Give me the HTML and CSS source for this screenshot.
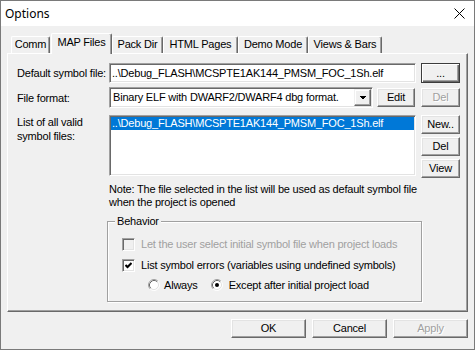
FILE: index.html
```html
<!DOCTYPE html>
<html>
<head>
<meta charset="utf-8">
<title>Options</title>
<link rel="stylesheet" href="styles.css">
</head>
<body>
<div class="window">
  <div class="titlebar">
    <span class="title">Options</span>
    <svg class="close" width="11" height="11" viewBox="0 0 11 11"><path d="M0.5 0.5L10.5 10.5M10.5 0.5L0.5 10.5" stroke="#000" stroke-width="1" fill="none"/></svg>
  </div>
  <div class="client">
    <div class="tabs">
      <div class="tab tab-comm">Comm</div>
      <div class="tab tab-map active">MAP Files</div>
      <div class="tab tab-pack">Pack Dir</div>
      <div class="tab tab-html">HTML Pages</div>
      <div class="tab tab-demo">Demo Mode</div>
      <div class="tab tab-views">Views &amp; Bars</div>
    </div>
    <div class="panel">
      <div class="form">
        <div class="lbl">Default symbol file:</div>
        <div class="field sunken">..\Debug_FLASH\MCSPTE1AK144_PMSM_FOC_1Sh.elf</div>
        <button class="btn btn-side btn-default">...</button>

        <div class="lbl r2">File format:</div>
        <div class="combo-row r2">
          <div class="combo sunken">
            <span class="combo-text">Binary ELF with DWARF2/DWARF4 dbg format.</span>
            <span class="combo-btn"><svg width="7" height="4" viewBox="0 0 7 4"><path d="M0 0H7L3.5 3.5Z" fill="#000"/></svg></span>
          </div>
          <button class="btn btn-edit">Edit</button>
        </div>
        <button class="btn btn-side r2" disabled>Del</button>

        <div class="lbl lbl-multi r3">List of all valid<br>symbol files:</div>
        <div class="listbox sunken r3">
          <div class="item selected">..\Debug_FLASH\MCSPTE1AK144_PMSM_FOC_1Sh.elf</div>
        </div>
        <div class="side-stack r3">
          <button class="btn btn-side">New..</button>
          <button class="btn btn-side">Del</button>
          <button class="btn btn-side">View</button>
        </div>

        <p class="note">Note: The file selected in the list will be used as default symbol file<br>when the project is opened</p>

        <fieldset class="group">
          <legend>Behavior</legend>
          <div class="check disabled">
            <span class="cb cb-disabled"></span>
            <span>Let the user select initial symbol file when project loads</span>
          </div>
          <div class="check">
            <span class="cb"><svg width="7" height="7" viewBox="0 0 7 7"><path d="M0.5 3L2.5 5L6.5 1" stroke="#000" stroke-width="2" fill="none"/></svg></span>
            <span>List symbol errors (variables using undefined symbols)</span>
          </div>
          <div class="radios">
            <div class="radio">
              <svg class="rb" width="12" height="12" viewBox="0 0 12 12">
                <circle cx="6" cy="6" r="5" fill="#fff"/>
                <path d="M2.11 9.89A5.5 5.5 0 0 1 9.89 2.11" stroke="#a0a0a0" fill="none"/>
                <path d="M9.89 2.11A5.5 5.5 0 0 1 2.11 9.89" stroke="#fff" fill="none"/>
                <path d="M2.82 9.18A4.5 4.5 0 0 1 9.18 2.82" stroke="#696969" fill="none"/>
                <path d="M9.18 2.82A4.5 4.5 0 0 1 2.82 9.18" stroke="#e3e3e3" fill="none"/>
              </svg>
              <span>Always</span>
            </div>
            <div class="radio radio-second">
              <svg class="rb" width="12" height="12" viewBox="0 0 12 12">
                <circle cx="6" cy="6" r="5" fill="#fff"/>
                <path d="M2.11 9.89A5.5 5.5 0 0 1 9.89 2.11" stroke="#a0a0a0" fill="none"/>
                <path d="M9.89 2.11A5.5 5.5 0 0 1 2.11 9.89" stroke="#fff" fill="none"/>
                <path d="M2.82 9.18A4.5 4.5 0 0 1 9.18 2.82" stroke="#696969" fill="none"/>
                <path d="M9.18 2.82A4.5 4.5 0 0 1 2.82 9.18" stroke="#e3e3e3" fill="none"/>
                <circle cx="6" cy="6" r="2" fill="#000"/>
              </svg>
              <span>Except after initial project load</span>
            </div>
          </div>
        </fieldset>
      </div>
    </div>
    <div class="footer">
      <button class="btn btn-lg">OK</button>
      <button class="btn btn-lg">Cancel</button>
      <button class="btn btn-lg" disabled>Apply</button>
    </div>
  </div>
</div>
</body>
</html>
```

FILE: styles.css
```css
* { box-sizing: border-box; }
html, body { margin: 0; padding: 0; }
body {
  font-family: "Liberation Sans", Arial, sans-serif;
  font-size: 11px;
  letter-spacing: -0.2px;
  color: #000;
  background: #f0f0f0;
}
.window {
  width: 475px;
  height: 350px;
  border: 1px solid #7a7a7a;
  background: #f0f0f0;
  display: flex;
  flex-direction: column;
}
.titlebar {
  flex: none;
  height: 25px;
  background: #fff;
  display: flex;
  align-items: center;
  justify-content: space-between;
  padding: 0 9px 0 4px;
}
.title {
  font-family: "Segoe UI", "Noto Sans", sans-serif;
  font-size: 12px;
  letter-spacing: 0;
}
.close { display: block; }
.client {
  flex: 1;
  display: flex;
  flex-direction: column;
  padding: 7px 6px 0 6px;
}
.tabs {
  flex: none;
  display: flex;
  align-items: flex-end;
  height: 20px;
  padding-left: 4px;
}
.tab {
  height: 17px;
  border-top: 1px solid #fff;
  border-left: 1px solid #fff;
  border-right: 1px solid #696969;
  border-radius: 2px 2px 0 0;
  box-shadow: inset -1px 0 0 #a0a0a0;
  background: #f0f0f0;
  text-align: center;
  line-height: 15px;
  white-space: nowrap;
}
.tab.active {
  height: 21px;
  margin-bottom: -1px;
  margin-left: 1px;
  position: relative;
  z-index: 1;
  line-height: 17px;
}
.tab-comm { width: 39px; }
.tab-map { width: 61px; }
.tab-pack { width: 51px; }
.tab-html { width: 75px; }
.tab-demo { width: 70px; }
.tab-views { width: 74px; }

.panel {
  flex: none;
  height: 259px;
  border: 1px solid;
  border-color: #fff #696969 #696969 #fff;
  box-shadow: inset -1px -1px 0 #a0a0a0;
  padding: 9px 0 0 9px;
}
.form {
  display: grid;
  grid-template-columns: 92px 307px 44px;
  align-items: center;
}
.lbl { white-space: nowrap; line-height: 14px; }
.r2 { margin-top: 4px; }
.r3 { margin-top: 7px; align-self: start; }
.lbl-multi { line-height: 14px; }

.sunken {
  border: 1px solid;
  border-color: #a0a0a0 #fff #fff #a0a0a0;
  box-shadow: inset 1px 1px 0 #696969, inset -1px -1px 0 #e3e3e3;
  background: #fff;
}
.field {
  height: 20px;
  line-height: 18px;
  padding-left: 2px;
  white-space: nowrap;
  overflow: hidden;
}
.btn {
  font: inherit;
  letter-spacing: inherit;
  color: #000;
  background: #f0f0f0;
  border: 1px solid;
  border-color: #fff #696969 #696969 #fff;
  border-radius: 0;
  box-shadow: inset -1px -1px 0 #a0a0a0, inset 1px 1px 0 #e3e3e3;
  padding: 0;
  height: 19px;
  line-height: 15px;
  text-align: center;
}
.btn:disabled {
  color: #a0a0a0;
  text-shadow: 1px 1px 0 #fff;
}
.btn-side { width: 39px; justify-self: end; }
.btn-default {
  height: 20px;
  border-color: #3c3c3c;
  box-shadow: inset 1px 1px 0 #fff, inset -1px -1px 0 #696969, inset -2px -2px 0 #a0a0a0;
}
.combo-row {
  display: flex;
  align-items: center;
  gap: 4px;
}
.combo {
  width: 264px;
  height: 21px;
  display: flex;
  align-items: stretch;
}
.combo-text {
  flex: 1;
  padding-left: 3px;
  line-height: 19px;
  white-space: nowrap;
  overflow: hidden;
}
.combo-btn {
  width: 17px;
  margin: 1px 1px 1px 0;
  background: #f0f0f0;
  border: 1px solid;
  border-color: #f0f0f0 #696969 #696969 #f0f0f0;
  box-shadow: inset -1px -1px 0 #a0a0a0, inset 1px 1px 0 #fff;
  display: flex;
  align-items: center;
  justify-content: center;
}
.combo-btn svg { display: block; shape-rendering: crispEdges; }
.btn-edit { width: 38px; }

.listbox {
  height: 61px;
  padding: 1px;
}
.item {
  height: 13px;
  line-height: 13px;
  padding-left: 1px;
  white-space: nowrap;
  overflow: hidden;
}
.item.selected { background: #0078d7; color: #fff; }
.side-stack {
  justify-self: end;
  display: flex;
  flex-direction: column;
  gap: 3px;
}

.note {
  grid-column: 2 / 4;
  margin: 5px 0 0 0;
  line-height: 13px;
  white-space: nowrap;
}

.group {
  grid-column: 2 / 4;
  width: 315px;
  min-width: 0;
  margin: 6px 0 0 -2px;
  border: 1px solid #a0a0a0;
  box-shadow: inset 1px 1px 0 #fff, 1px 1px 0 #fff;
  padding: 9px 0 9px 14px;
}
.group legend {
  margin-left: -7px;
  padding: 0 2px;
  line-height: 13px;
  background: #f0f0f0;
}
.check {
  display: flex;
  align-items: center;
  gap: 6px;
  height: 14px;
  white-space: nowrap;
}
.check + .check { margin-top: 7px; }
.check.disabled { color: #a0a0a0; }
.cb {
  flex: none;
  width: 13px;
  height: 13px;
  border: 1px solid;
  border-color: #a0a0a0 #fff #fff #a0a0a0;
  box-shadow: inset 1px 1px 0 #696969, inset -1px -1px 0 #e3e3e3;
  background: #fff;
  display: flex;
  align-items: center;
  justify-content: center;
}
.cb svg { display: block; }
.cb-disabled { background: #f0f0f0; }
.radios {
  display: flex;
  align-items: center;
  height: 14px;
  margin-top: 6px;
  padding-left: 26px;
  white-space: nowrap;
}
.radio {
  display: flex;
  align-items: center;
  gap: 4px;
}
.radio-second { margin-left: 13px; gap: 6px; }
.rb { display: block; flex: none; }

.footer {
  flex: none;
  display: flex;
  justify-content: flex-end;
  gap: 6px;
  padding-top: 7px;
}
.btn-lg { width: 75px; }
```
